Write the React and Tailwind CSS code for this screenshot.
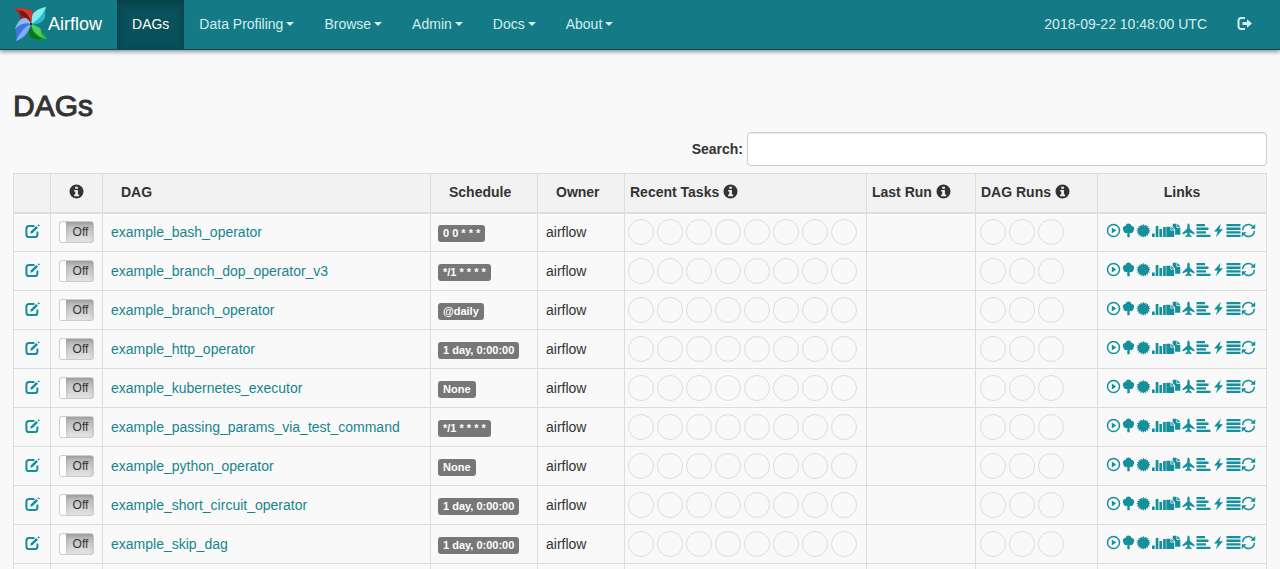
import React from "react";

const NAV_ITEMS = ["Data Profiling", "Browse", "Admin", "Docs", "About"];

const DAGS = [
  { id: "example_bash_operator", schedule: "0 0 * * *" },
  { id: "example_branch_dop_operator_v3", schedule: "*/1 * * * *" },
  { id: "example_branch_operator", schedule: "@daily" },
  { id: "example_http_operator", schedule: "1 day, 0:00:00" },
  { id: "example_kubernetes_executor", schedule: "None" },
  { id: "example_passing_params_via_test_command", schedule: "*/1 * * * *" },
  { id: "example_python_operator", schedule: "None" },
  { id: "example_short_circuit_operator", schedule: "1 day, 0:00:00" },
  { id: "example_skip_dag", schedule: "1 day, 0:00:00" },
];

function Glyph({ children, className = "" }) {
  return (
    <svg viewBox="0 0 15 15" fill="currentColor" aria-hidden="true" className={`block size-[15px] shrink-0 ${className}`}>
      {children}
    </svg>
  );
}

function PinwheelLogo() {
  return (
    <svg viewBox="0 0 34 34" className="block size-[34px] shrink-0" aria-hidden="true">
      <path d="M0 2 C6 1 12 2 17 3 C20 6 20 11 17 17 C14 12 8 12 6 11 C6 7 4 4 0 2 Z" fill="#a81f1a" />
      <path d="M0 2 C8 4 15 6 17 17 C20 11 20 6 17 3 C12 2 6 1 0 2 Z" fill="#d3382e" />
      <path d="M5 3 C11 4 16 8 17 17 C14 12 11 9 7 8 Z" fill="#7d1512" />
      <path d="M32 0 C31 4 31 9 31 11 C28 16 23 18 17 17 C18 11 22 5 32 0 Z" fill="#2bb9c9" />
      <path d="M32 0 C22 2 17 6 18 13 L17 17 C23 14 28 9 32 0 Z" fill="#7ff0ee" />
      <path d="M33 32 C27 33 22 33 17 31 C13 27 13 22 17 17 C23 18 29 24 33 32 Z" fill="#18a030" />
      <path d="M33 32 C28 29 26 26 27 22 C23 19 20 18 17 17 C18 24 24 30 33 32 Z" fill="#4bd05b" />
      <path d="M17 17 C17 23 21 29 29 32 C23 33 20 32 17 31 C14 27 13 22 17 17 Z" fill="#0b7423" />
      <path d="M2 34 C3 29 2 25 1 22 C3 16 7 13 12 14 L17 17 C16 24 11 31 2 34 Z" fill="#3c76d8" />
      <path d="M1 22 C5 10 13 7 17 17 C11 15 6 17 1 22 Z" fill="#8fb9f4" />
      <path d="M2 34 C6 25 10 20 17 17 C15 25 10 31 2 34 Z" fill="#79adf5" />
      <circle cx="17" cy="17" r="1.200" fill="#1f2f3a" />
    </svg>
  );
}

function InfoIcon() {
  return (
    <Glyph className="text-[#333]">
      <path
        fillRule="evenodd"
        d="M7.500 .5a7 7 0 1 0 0 14a7 7 0 0 0 0-14zM6.200 2.700h2.700v2.100H6.200zM5.200 6h3.700v4.600h1.200v1.600H5.100v-1.600h1.200V7.600H5.200z"
      />
    </Glyph>
  );
}

function EditIcon() {
  return (
    <Glyph>
      <path
        d="M9.500 2H4A2.600 2.600 0 0 0 1.400 4.600v5.800A2.600 2.600 0 0 0 4 13h5.800a2.600 2.600 0 0 0 2.600-2.600V7.500"
        fill="none"
        stroke="currentColor"
        strokeWidth="2"
      />
      <path d="M5.300 9.700l.6-2.500 5.300-5.300 1.800 1.800-5.300 5.300z" />
      <path d="M12.500 1.200l1-1 1.400 1.400-1 1z" />
    </Glyph>
  );
}

function LogoutIcon() {
  return (
    <Glyph>
      <path
        d="M8 2H4A2.500 2.500 0 0 0 1.500 4.500v6A2.500 2.500 0 0 0 4 13h4"
        fill="none"
        stroke="currentColor"
        strokeWidth="2"
      />
      <path d="M5.500 6H10V3.200L15 7.500l-5 4.300V9H5.500z" />
    </Glyph>
  );
}

const LINKS = [
  {
    title: "Trigger Dag",
    shape: (
      <>
        <circle cx="7.500" cy="7.500" r="6" fill="none" stroke="currentColor" strokeWidth="1.500" />
        <path d="M5.800 4.600L10.200 7.500L5.800 10.400z" />
      </>
    ),
  },
  {
    title: "Tree View",
    shape: (
      <path d="M7.500 .6a3 3 0 0 1 2.900 2.200A3 3 0 0 1 12.600 7.600A2.600 2.600 0 0 1 8.700 9.800V14.200H6.300V9.800A2.600 2.600 0 0 1 2.400 7.600A3 3 0 0 1 4.600 2.800A3 3 0 0 1 7.500.6z" />
    ),
  },
  {
    title: "Graph View",
    shape: (
      <path d="M7.500 .8l1 1.900 1.700-1.300.2 2.200 2-.7-.5 2.100 2.200.2-1.300 1.600 1.700 1-1.800 1 1.200 1.700-2.200.1.500 2.100-2-.6-.3 2.100-1.600-1.300-.9 1.900-1-1.900-1.700 1.300-.2-2.200-2.100.7.600-2.100-2.200-.2 1.300-1.600-1.800-1 1.900-1L.8 5.100l2.200-.1-.6-2.100 2.100.6.200-2.100 1.800 1.300z" />
    ),
  },
  {
    title: "Tasks Duration",
    shape: <path d="M1 10.500h2.700V14H1zM4.700 3h2.700v11H4.700zM8.400 6h2.700v8H8.400zM12.100 4h2.700v10h-2.700z" />,
  },
  {
    title: "Task Tries",
    shape: (
      <>
        <path d="M.3 3.700h4.200v3.800h3.700V14H.3zM5.300 3.700L8.200 6.700H5.300z" />
        <path d="M6.700 .8h3.800v4H14.300v6.900H9.100V6.500L6.700 4zM11.300 .8l3 3.200h-3z" />
      </>
    ),
  },
  {
    title: "Landing Times",
    shape: (
      <path d="M7.500 .5c.8 0 1.200 1.200 1.200 2.300v2.800l4.800 4.300v1.500L8.700 9.400v2.100l1.800 1.500v1.300l-3-.8-3 .8V13l1.800-1.500V9.400L1.500 11.400V9.900l4.800-4.300V2.800C6.300 1.700 6.700.5 7.500.5z" />
    ),
  },
  {
    title: "Gantt View",
    shape: <path d="M.5 1h8.500v2.300H.5zM.5 4.600h12v2.300H.5zM.5 8.200h9.500v2.300H.5zM.5 11.800h14v2.300H.5z" />,
  },
  {
    title: "Code View",
    shape: <path d="M9.800 .8L3 8.500h3.700L4.900 14.300L12 6.300H8.300z" />,
  },
  {
    title: "Logs",
    shape: <path d="M.5 1h14v2.300H.5zM.5 4.600h14v2.300H.5zM.5 8.200h14v2.300H.5zM.5 11.800h14v2.300H.5z" />,
  },
  {
    title: "Refresh",
    shape: (
      <>
        <path
          d="M1.700 7.300A5.700 5.700 0 0 1 12.200 4.200M13.300 7.700A5.700 5.700 0 0 1 2.800 10.800"
          fill="none"
          stroke="currentColor"
          strokeWidth="1.500"
        />
        <path d="M14.200 1V5.700H9.500zM.8 14V9.300h4.700z" />
      </>
    ),
  },
];

function NavBar() {
  return (
    <nav className="flex h-[50px] items-stretch border-b border-[#0a4a50] bg-[#147a85] text-sm text-[#d3eef0] shadow-[0_2px_4px_rgba(40,50,80,0.5)]">
      <a href="#home" className="flex items-center pr-[15px] pb-0.5 pl-[14px] text-lg text-white">
        <PinwheelLogo />
        <span>Airflow</span>
      </a>
      <a
        href="#dags"
        className="flex items-center bg-[#09505a] px-[15px] pb-0.5 text-white shadow-[inset_0_3px_9px_rgba(0,0,0,0.25)]"
      >
        DAGs
      </a>
      {NAV_ITEMS.map((item) => (
        <button key={item} type="button" className="flex items-center gap-[3px] px-[15px] pb-0.5">
          {item}
          <span className="border-x-4 border-t-4 border-x-transparent border-t-current" />
        </button>
      ))}
      <div className="ml-auto flex items-center gap-[30px] pr-7 pb-0.5">
        <span>2018-09-22 10:48:00 UTC</span>
        <a href="#logout" aria-label="Log out">
          <LogoutIcon />
        </a>
      </div>
    </nav>
  );
}

function Toggle({ dag }) {
  return (
    <button
      type="button"
      role="switch"
      aria-checked="false"
      aria-label={`Turn on ${dag}`}
      className="mx-auto flex h-[22px] w-[35px] overflow-hidden rounded-[3px] border border-[#ccc] bg-linear-to-b from-[#b3b3b3] to-[#e6e6e6] text-xs text-[#333]"
    >
      <span className="h-full w-[6px] shrink-0 bg-white" />
      <span className="flex h-full flex-1 items-center justify-center pl-0.5 shadow-[inset_0_2px_4px_rgba(0,0,0,0.15)]">
        Off
      </span>
    </button>
  );
}

function Circles({ count }) {
  return (
    <div className="flex gap-[3px]">
      {Array.from({ length: count }, (_, i) => (
        <span key={i} className="size-[26px] shrink-0 rounded-full border border-[#ddd]" />
      ))}
    </div>
  );
}

function DagRow({ dag }) {
  return (
    <tr className="h-[39px] *:border *:border-[#ddd] *:p-0">
      <td className="text-[#148f9b]">
        <a href="#edit" aria-label={`Edit ${dag.id}`} className="flex justify-center pb-0.5">
          <EditIcon />
        </a>
      </td>
      <td>
        <Toggle dag={dag.id} />
      </td>
      <td>
        <a href="#dag" className="px-2 text-[#17858d]">
          {dag.id}
        </a>
      </td>
      <td>
        <a
          href="#schedule"
          className="ml-[7px] inline-block rounded-[3px] bg-[#777] px-[5px] align-middle text-[11px] leading-[17px] font-bold whitespace-nowrap text-white"
        >
          {dag.schedule}
        </a>
      </td>
      <td>
        <span className="px-2">airflow</span>
      </td>
      <td>
        <div className="pl-[3px]">
          <Circles count={8} />
        </div>
      </td>
      <td />
      <td>
        <div className="pl-1">
          <Circles count={3} />
        </div>
      </td>
      <td>
        <div className="flex pb-[3px] pl-2 text-[#148f9b]">
          {LINKS.map((link) => (
            <a key={link.title} href="#view" aria-label={link.title}>
              <Glyph>{link.shape}</Glyph>
            </a>
          ))}
        </div>
      </td>
    </tr>
  );
}

function InfoHeading({ children }) {
  return (
    <span className="flex items-center gap-1 pl-[5px] whitespace-nowrap">
      {children} <InfoIcon />
    </span>
  );
}

export default function App() {
  return (
    <div className="h-screen overflow-hidden bg-[#f9f9f9] font-['Liberation_Sans',Arial,sans-serif] text-sm text-[#333]">
      <NavBar />
      <main className="px-[13px] pt-[38px]">
        <h1 className="text-3xl leading-9 font-medium [-webkit-text-stroke:1px_#333]">DAGs</h1>
        <div className="mt-2 flex items-center justify-end gap-1">
          <label htmlFor="search" className="font-bold">
            Search:
          </label>
          <input
            id="search"
            type="search"
            className="h-[34px] w-[520px] rounded border border-[#ccc] bg-white px-3 shadow-[inset_0_1px_1px_rgba(0,0,0,0.08)] outline-none"
          />
        </div>
        <table className="mt-[7px] w-full table-fixed border-collapse">
          <colgroup>
            <col className="w-[37px]" />
            <col className="w-[52px]" />
            <col />
            <col className="w-[107px]" />
            <col className="w-[87px]" />
            <col className="w-[242px]" />
            <col className="w-[109px]" />
            <col className="w-[122px]" />
            <col className="w-[169px]" />
          </colgroup>
          <thead className="bg-[#f2f2f2]">
            <tr className="h-[39px] text-left *:border *:border-b-2 *:border-[#ddd] *:p-0 *:pb-0.5">
              <th aria-label="Edit" />
              <th>
                <span className="flex justify-center">
                  <InfoIcon />
                </span>
              </th>
              <th>
                <span className="pl-[18px]">DAG</span>
              </th>
              <th>
                <span className="pl-[18px]">Schedule</span>
              </th>
              <th>
                <span className="pl-[18px]">Owner</span>
              </th>
              <th>
                <InfoHeading>Recent Tasks</InfoHeading>
              </th>
              <th>
                <InfoHeading>Last Run</InfoHeading>
              </th>
              <th>
                <InfoHeading>DAG Runs</InfoHeading>
              </th>
              <th className="text-center">Links</th>
            </tr>
          </thead>
          <tbody>
            {DAGS.map((dag) => (
              <DagRow key={dag.id} dag={dag} />
            ))}
            <tr className="h-[39px] *:border *:border-[#ddd]">
              <td />
              <td />
              <td />
              <td />
              <td />
              <td />
              <td />
              <td />
              <td />
            </tr>
          </tbody>
        </table>
      </main>
    </div>
  );
}
